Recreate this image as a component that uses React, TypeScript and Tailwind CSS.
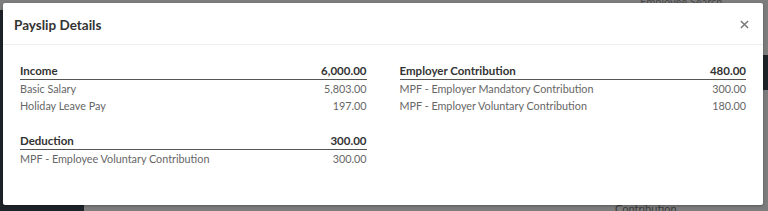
const income = [
  { label: 'Basic Salary', amount: '5,803.00' },
  { label: 'Holiday Leave Pay', amount: '197.00' },
];

const deduction = [{ label: 'MPF - Employee Voluntary Contribution', amount: '300.00' }];

const employer = [
  { label: 'MPF - Employer Mandatory Contribution', amount: '300.00' },
  { label: 'MPF - Employer Voluntary Contribution', amount: '180.00' },
];

type Item = { label: string; amount: string };

function Section({ title, total, items }: { title: string; total: string; items: Item[] }) {
  return (
    <div>
      <div className="flex justify-between items-end border-b border-[#555] font-bold text-[#333] text-[11.5px] leading-[16px]">
        <span>{title}</span>
        <span>{total}</span>
      </div>
      <div>
        {items.map((it) => (
          <div key={it.label} className="flex justify-between text-[#666] leading-[17px]">
            <span>{it.label}</span>
            <span>{it.amount}</span>
          </div>
        ))}
      </div>
    </div>
  );
}

export default function App() {
  return (
    <div
      className="relative w-[768px] h-[211px] overflow-hidden bg-[#7d7d7d] text-[10.8px]"
      style={{ fontFamily: 'Lato, "Open Sans", sans-serif' }}
    >
      {/* dimmed page behind the modal */}
      <div className="absolute left-0 top-[10px] w-[3px] h-[201px] bg-[#1e2329]" />
      <div className="absolute left-0 top-[204px] w-[84px] h-[7px] bg-[#1e2329]" />
      <div className="absolute right-0 top-[55px] w-[5px] h-[35px] bg-[#1e2329]" />
      <div className="absolute left-[640px] top-[-4px] text-[11px] leading-[12px] text-[#4a4a4a]">Employee Search</div>
      <div className="absolute left-[615px] top-[203px] text-[11px] leading-[12px] text-[#3a3a3a]">Contribution</div>

      {/* modal */}
      <div className="absolute left-[3px] top-[3px] w-[760px] h-[202px] bg-white rounded-[2px] shadow-[0_1px_3px_rgba(0,0,0,0.3)]">
        <div className="flex items-center justify-between h-[42px] px-[11px] border-b border-[#eee]">
          <h2 className="text-[13.5px] font-bold text-[#333] mt-[3px]">Payslip Details</h2>
          <svg className="w-[9px] h-[9px] mr-[3px] mt-[1px] text-[#777]" viewBox="0 0 10 10" stroke="currentColor" strokeWidth={1.6}>
            <path d="M1 1l8 8M9 1l-8 8" />
          </svg>
        </div>
        <div className="grid grid-cols-2 gap-[33px] px-[17px] pt-[18px]">
          <div className="flex flex-col gap-[19px]">
            <Section title="Income" total="6,000.00" items={income} />
            <Section title="Deduction" total="300.00" items={deduction} />
          </div>
          <div>
            <Section title="Employer Contribution" total="480.00" items={employer} />
          </div>
        </div>
      </div>
    </div>
  );
}
